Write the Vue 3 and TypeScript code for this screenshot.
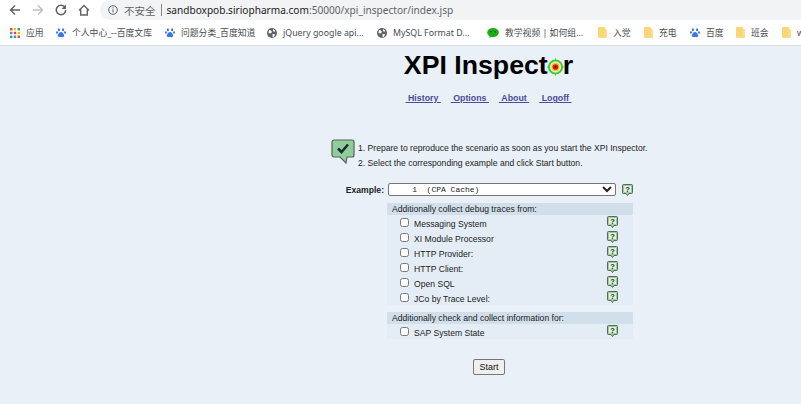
<template>
  <div class="page">
    <svg class="defs" width="0" height="0">
      <symbol id="help" viewBox="0 0 11 12">
        <path d="M1.5.5h8a1 1 0 0 1 1 1v7a1 1 0 0 1-1 1H7L5.5 11.5 4 9.500H1.500a1 1 0 0 1-1-1v-7a1 1 0 0 1 1-1z" fill="#9ccb9c" stroke="#4d6b55" stroke-width="1" />
        <rect x="2" y="2" width="7" height="6" fill="#dfeedd" />
      </symbol>
      <symbol id="paw" viewBox="0 0 10 10">
        <ellipse cx="2.900" cy="1.800" rx="1.100" ry="1.500" fill="#3b78e7" />
        <ellipse cx="7.100" cy="1.800" rx="1.100" ry="1.500" fill="#3b78e7" />
        <ellipse cx="1" cy="4.500" rx="1" ry="1.300" fill="#3b78e7" />
        <ellipse cx="9" cy="4.500" rx="1" ry="1.300" fill="#3b78e7" />
        <path d="M5 4c1.500 0 3.200 2.200 3.200 3.800C8.200 9.500 6 9.200 5 9S1.800 9.500 1.800 7.800C1.800 6.200 3.500 4 5 4z" fill="#3b78e7" />
      </symbol>
      <symbol id="globe" viewBox="0 0 10 10">
        <circle cx="5" cy="5" r="5" fill="#5f6368" />
        <path d="M2 2l2 .5 1 1.500-1.500 1.500L1.500 5zM6 1l2.200 1.500L7.500 4 6 3zM5.500 6l2.500.2-.8 2.300-1.500.8z" fill="#fff" />
      </symbol>
      <symbol id="wechat" viewBox="0 0 12 10">
        <ellipse cx="6" cy="4.600" rx="5.800" ry="4.600" fill="#1aad19" />
        <path d="M2.800 7.500L2.500 10l2.500-1.500z" fill="#1aad19" />
        <circle cx="4" cy="3.800" r=".8" fill="#0b5c0b" />
        <circle cx="8" cy="3.800" r=".8" fill="#0b5c0b" />
      </symbol>
      <symbol id="folder" viewBox="0 0 9 11">
        <path d="M0 1a1 1 0 0 1 1-1h5l3 3v7a1 1 0 0 1-1 1H1a1 1 0 0 1-1-1z" fill="#fbdc8a" />
        <path d="M6.500 0H1a1 1 0 0 0-1 1v9h6.500z" fill="#f9d777" />
      </symbol>
    </svg>

    <!-- Browser chrome -->
    <header class="toolbar">
      <svg class="nav-icon back" width="12" height="12" viewBox="0 0 12 12"><path d="M11 6H2M6 1.500L1.500 6 6 10.500" fill="none" stroke="#5f6368" stroke-width="1.500" /></svg>
      <svg class="nav-icon forward" width="12" height="12" viewBox="0 0 12 12"><path d="M1 6h9M6 1.500L10.500 6 6 10.500" fill="none" stroke="#bdc1c6" stroke-width="1.500" /></svg>
      <svg class="nav-icon reload" width="12" height="12" viewBox="0 0 12 12"><path d="M10 3.500A4.700 4.700 0 1 0 10.700 6" fill="none" stroke="#5f6368" stroke-width="1.500" /><path d="M11 .5v4.500H6.500z" fill="#5f6368" /></svg>
      <svg class="nav-icon home" width="12" height="12" viewBox="0 0 12 12"><path d="M1 6.500L6 1.500l5 5M2.700 5.500v5.500h6.600V5.500" fill="none" stroke="#5f6368" stroke-width="1.400" /></svg>
      <div class="omnibox">
        <svg width="10" height="10" viewBox="0 0 10 10"><circle cx="5" cy="5" r="4.300" fill="none" stroke="#5f6368" /><path d="M5 4.300v3M5 2.400v1" stroke="#5f6368" /></svg>
        <span class="insecure">不安全</span>
        <span class="divider"></span>
        <span class="url">sandboxpob.siriopharma.com<span class="url-rest">:50000/xpi_inspector/index.jsp</span></span>
      </div>
    </header>

    <nav class="bookmarks">
      <div v-for="b in bookmarks" :key="b.id" class="bookmark" :style="{ width: b.width + 'px' }">
        <svg v-if="b.icon === 'apps'" class="bm-icon" width="10" height="10" viewBox="0 0 10 10">
          <template v-for="(c, i) in appColors" :key="i">
            <rect :x="(i % 3) * 3.800" :y="Math.floor(i / 3) * 3.800" width="2.400" height="2.400" :fill="c" />
          </template>
        </svg>
        <svg v-else class="bm-icon" :width="b.icon === 'wechat' ? 12 : b.icon === 'folder' ? 9 : 10" :height="b.icon === 'folder' ? 11 : 10"><use :href="'#' + b.icon" /></svg>
        <span class="bm-text">{{ b.label }}</span>
      </div>
    </nav>

    <!-- Inspector page -->
    <main class="content">
      <div class="column">
        <h1 class="title">
          XPI Inspect<svg class="target" width="17" height="18" viewBox="0 0 18 18">
            <path d="M9 0v18M0 9h18" stroke="#35c435" stroke-width="1" />
            <circle cx="9" cy="9" r="7" fill="#f3e7b5" stroke="#2fd02f" stroke-width="2" />
            <circle cx="9" cy="9" r="4.200" fill="#f0c419" />
            <circle cx="9" cy="9" r="3" fill="#e01b1b" />
            <circle cx="9" cy="9" r="1.200" fill="#5a1010" />
          </svg>r
        </h1>
        <div class="links">
          <a v-for="l in links" :key="l" href="#" class="link">&nbsp;{{ l }}&nbsp;</a>
        </div>
        <div class="intro">
          <svg class="check" width="24" height="25" viewBox="0 0 24 25">
            <path d="M3 1h18a2 2 0 0 1 2 2v13a2 2 0 0 1-2 2h-5l-1 6-6-6H3a2 2 0 0 1-2-2V3a2 2 0 0 1 2-2z" fill="#8fce9a" stroke="#55635a" stroke-width="1.200" />
            <path d="M7 9.500l3.500 3.500L17 5.500" fill="none" stroke="#1d2a3a" stroke-width="2.600" />
          </svg>
          <ol class="steps">
            <li>1. Prepare to reproduce the scenario as soon as you start the XPI Inspector.</li>
            <li>2. Select the corresponding example and click Start button.</li>
          </ol>
        </div>
      </div>

      <div class="example-row">
        <label class="example-label" for="example">Example:</label>
        <select id="example" v-model="example" class="example-select">
          <option value="1">&nbsp;&nbsp;&nbsp;&nbsp;1&nbsp;&nbsp;(CPA Cache)</option>
        </select>
        <svg class="help" width="11" height="12" viewBox="0 0 11 12"><use href="#help" /><text x="5.500" y="7.800" text-anchor="middle" class="help-mark">?</text></svg>
      </div>

      <section v-for="g in groups" :key="g.title" class="group">
        <div class="group-title">{{ g.title }}</div>
        <div v-for="o in g.options" :key="o" class="option">
          <input type="checkbox" class="check-input" />
          <span class="option-label">{{ o }}</span>
          <svg class="help" width="11" height="12" viewBox="0 0 11 12"><use href="#help" /><text x="5.500" y="7.800" text-anchor="middle" class="help-mark">?</text></svg>
        </div>
      </section>

      <div class="actions">
        <button class="start">Start</button>
      </div>
    </main>
  </div>
</template>

<script setup lang="ts">
import { ref } from 'vue'

interface Bookmark {
  id: number
  icon: string
  label: string
  width: number
}

const example = ref<string>('1')

const appColors = ['#ea4335', '#fbbc05', '#34a853', '#4285f4', '#ea4335', '#fbbc05', '#34a853', '#4285f4', '#ea4335']

const bookmarks: Bookmark[] = [
  { id: 1, icon: 'apps', label: '应用', width: 46 },
  { id: 2, icon: 'paw', label: '个人中心_--百度文库', width: 109 },
  { id: 3, icon: 'paw', label: '问题分类_百度知道', width: 102 },
  { id: 4, icon: 'globe', label: 'jQuery google api...', width: 110 },
  { id: 5, icon: 'globe', label: 'MySQL Format D...', width: 110 },
  { id: 6, icon: 'wechat', label: '教学视频 | 如何组...', width: 111 },
  { id: 7, icon: 'folder', label: '入党', width: 46 },
  { id: 8, icon: 'folder', label: '充电', width: 46 },
  { id: 9, icon: 'paw', label: '百度', width: 46 },
  { id: 10, icon: 'folder', label: '班会', width: 46 },
  { id: 11, icon: 'folder', label: 'w', width: 46 }
]

const links = ['History', 'Options', 'About', 'Logoff']

const groups = [
  {
    title: 'Additionally collect debug traces from:',
    options: ['Messaging System', 'XI Module Processor', 'HTTP Provider:', 'HTTP Client:', 'Open SQL', 'JCo by Trace Level:']
  },
  {
    title: 'Additionally check and collect information for:',
    options: ['SAP System State']
  }
]
</script>

<style scoped>
.page {
  width: 801px;
  height: 404px;
  overflow: hidden;
  background: #e9f0f7;
  font-family: "Liberation Sans", Arial, sans-serif;
  color: #222;
}

.defs {
  display: block;
  height: 0;
}

.toolbar {
  display: flex;
  align-items: center;
  height: 20px;
  background: #fff;
}

.nav-icon {
  flex: none;
}

.back { margin-left: 9px; }
.forward { margin-left: 11px; }
.reload { margin-left: 11px; }
.home { margin-left: 11px; }

.omnibox {
  display: flex;
  align-items: center;
  flex: 1;
  height: 20px;
  margin-left: 10px;
  padding-left: 8px;
  background: #f1f3f4;
  border-radius: 10px 0 0 10px;
}

.insecure {
  margin-left: 6px;
  color: #5f6368;
  font-family: "Noto Sans CJK SC", sans-serif;
  font-size: 10.500px;
}

.divider {
  width: 1px;
  height: 12px;
  margin: 0 5px;
  background: #80868b;
}

.url {
  color: #202124;
  font-family: "Noto Sans", sans-serif;
  font-size: 10.100px;
}

.url-rest {
  color: #5f6368;
}

.bookmarks {
  display: flex;
  align-items: center;
  height: 25px;
  padding-left: 10px;
  background: #fff;
  border-bottom: 1px solid #dadce0;
  white-space: nowrap;
}

.bookmark {
  display: flex;
  align-items: center;
  flex: none;
  gap: 6px;
}

.bm-icon {
  flex: none;
}

.bm-text {
  color: #4a4d50;
  font-family: "Noto Sans", "Noto Sans CJK SC", sans-serif;
  font-size: 8.800px;
}

.content {
  padding-top: 5px;
}

.column {
  width: 315px;
  margin-left: 331px;
}

.title {
  display: flex;
  align-items: center;
  justify-content: center;
  height: 28px;
  margin: 0;
  color: #000;
  font-size: 26.700px;
  font-weight: 700;
  line-height: 28px;
  white-space: pre;
}

.target {
  flex: none;
  margin: 3px -1px 0;
}

.links {
  display: flex;
  justify-content: center;
  gap: 10px;
  margin-top: 14px;
}

.link {
  color: #4b4b99;
  font-size: 8.800px;
  font-weight: 700;
}

.intro {
  display: flex;
  gap: 3px;
  margin-top: 36px;
}

.check {
  flex: none;
}

.steps {
  margin: 0;
  padding: 2px 0 0;
  list-style: none;
  font-size: 8.600px;
  line-height: 15px;
  white-space: nowrap;
}

.example-row {
  display: flex;
  align-items: center;
  height: 13px;
  margin-top: 12px;
  padding-left: 345px;
}

.example-label {
  width: 39px;
  font-size: 8.600px;
  font-weight: 700;
  text-align: right;
}

.example-select {
  width: 228px;
  height: 13px;
  margin-left: 4px;
  padding: 0;
  border: 1px solid #767676;
  border-radius: 2px;
  background: #fff;
  color: #222;
  font-family: "Liberation Mono", monospace;
  font-size: 8px;
}

.example-row .help {
  margin-left: 6px;
}

.help-mark {
  fill: #26372c;
  font-family: "Liberation Sans", sans-serif;
  font-size: 7.500px;
  font-weight: 700;
}

.group {
  width: 246px;
  margin-left: 387px;
  background: #e4edf5;
}

.example-row + .group {
  margin-top: 7px;
}

.group + .group {
  margin-top: 7px;
}

.group-title {
  height: 12px;
  padding-left: 5px;
  background: #d0dfea;
  font-size: 8.600px;
  line-height: 12px;
}

.option {
  display: flex;
  align-items: center;
  height: 15px;
  padding-left: 13px;
}

.option .help {
  margin-bottom: 2px;
}

.check-input {
  flex: none;
  width: 9px;
  height: 9px;
  margin: 0 5px 1px 0;
}

.option-label {
  width: 193px;
  margin-top: 2px;
  font-size: 8.600px;
}

.actions {
  display: flex;
  margin-top: 20px;
  padding-left: 473px;
}

.start {
  width: 32px;
  height: 16px;
  padding: 0;
  border: 1px solid #767676;
  border-radius: 2px;
  background: #efefef;
  color: #111;
  font-family: "Liberation Sans", Arial, sans-serif;
  font-size: 9px;
}
</style>
